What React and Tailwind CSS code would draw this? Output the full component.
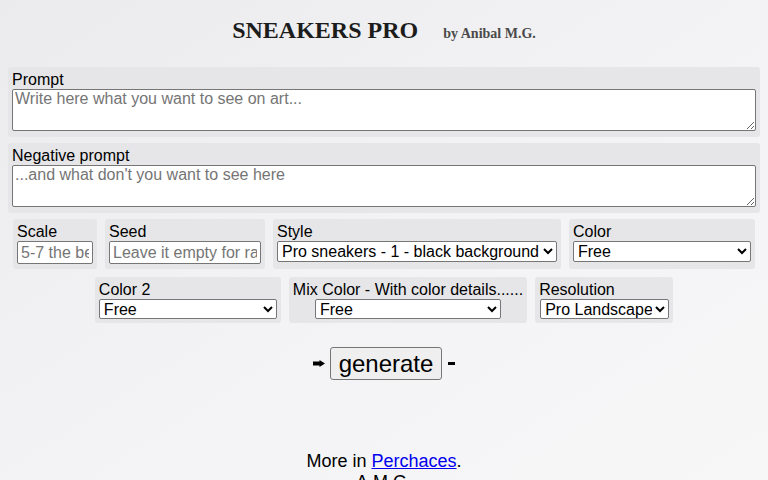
import { useState } from 'react'

const STYLES = [
  'Pro sneakers - 1 - black background',
  'Pro sneakers - 2 - white background',
  'Pro sneakers - 3 - street',
]
const COLORS = ['Free', 'Red', 'Blue', 'Green', 'Black', 'White']
const RESOLUTIONS = ['Pro Landscape', 'Pro Portrait', 'Square']

const panel = 'bg-[#e6e6e8] rounded-[3px] px-1 pt-1'
const label = 'block leading-[18px] text-[16px] text-black'
const field =
  'block bg-white border border-[#767676] rounded-[2px] text-[16px] text-black placeholder:text-[#757575]'

function Arrow() {
  return (
    <svg width="12" height="7" viewBox="0 0 12 7" className="shrink-0">
      <path d="M0 1.5h6.5V0L12 3.5 6.5 7V5.5H0z" fill="#000" />
    </svg>
  )
}

export default function App() {
  const [prompt, setPrompt] = useState('')
  const [negative, setNegative] = useState('')
  const [scale, setScale] = useState('')
  const [seed, setSeed] = useState('')
  const [style, setStyle] = useState(STYLES[0])
  const [color, setColor] = useState('Free')
  const [color2, setColor2] = useState('Free')
  const [mix, setMix] = useState('Free')
  const [resolution, setResolution] = useState(RESOLUTIONS[0])

  return (
    <div className="min-h-[480px] bg-gradient-to-br from-[#ebebed] via-[#f3f3f5] to-[#f7f7f8] font-['Liberation_Sans',Arial,sans-serif] text-black">
      <header className="h-[67px] flex justify-center items-baseline gap-[25px] pt-[16px] leading-[28px] font-['Liberation_Serif','Times_New_Roman',serif] font-bold">
        <h1 className="text-[24px] text-[#1c1c1c]">SNEAKERS PRO</h1>
        <span className="text-[14px] text-[#4a4a4a]">by Anibal M.G.</span>
      </header>

      <main className="px-2">
        <div className={`${panel} pb-1.5`}>
          <label className={label}>Prompt</label>
          <textarea
            value={prompt}
            onChange={(e) => setPrompt(e.target.value)}
            placeholder="Write here what you want to see on art..."
            className={`${field} w-full h-[42px] px-[2px] py-0 leading-[18px]`}
          />
        </div>

        <div className={`${panel} pb-1.5 mt-1.5`}>
          <label className={label}>Negative prompt</label>
          <textarea
            value={negative}
            onChange={(e) => setNegative(e.target.value)}
            placeholder="...and what don't you want to see here"
            className={`${field} w-full h-[42px] px-[2px] py-0 leading-[18px]`}
          />
        </div>

        <div className="flex justify-center gap-2 mt-1.5">
          <div className={`${panel} pb-[5px]`}>
            <label className={label}>Scale</label>
            <input
              value={scale}
              onChange={(e) => setScale(e.target.value)}
              placeholder="5-7 the best"
              className={`${field} w-[76px] h-[23px] px-[3px]`}
            />
          </div>
          <div className={`${panel} pb-[5px]`}>
            <label className={label}>Seed</label>
            <input
              value={seed}
              onChange={(e) => setSeed(e.target.value)}
              placeholder="Leave it empty for random"
              className={`${field} w-[152px] h-[23px] px-[3px]`}
            />
          </div>
          <div className={`${panel} pb-[5px]`}>
            <label className={label}>Style</label>
            <select
              value={style}
              onChange={(e) => setStyle(e.target.value)}
              className={`${field} w-[280px] h-[21px]`}
            >
              {STYLES.map((s) => (
                <option key={s}>{s}</option>
              ))}
            </select>
          </div>
          <div className={`${panel} pb-[5px]`}>
            <label className={label}>Color</label>
            <select
              value={color}
              onChange={(e) => setColor(e.target.value)}
              className={`${field} w-[178px] h-[21px]`}
            >
              {COLORS.map((c) => (
                <option key={c}>{c}</option>
              ))}
            </select>
          </div>
        </div>

        <div className="flex justify-center gap-2 mt-2">
          <div className={`${panel} pb-1`}>
            <label className={label}>Color 2</label>
            <select
              value={color2}
              onChange={(e) => setColor2(e.target.value)}
              className={`${field} w-[178px] h-[20px]`}
            >
              {COLORS.map((c) => (
                <option key={c}>{c}</option>
              ))}
            </select>
          </div>
          <div className={`${panel} pb-1 text-center`}>
            <label className={`${label} text-left`}>Mix Color - With color details......</label>
            <select
              value={mix}
              onChange={(e) => setMix(e.target.value)}
              className={`${field} w-[186px] h-[20px] mx-auto`}
            >
              {COLORS.map((c) => (
                <option key={c}>{c}</option>
              ))}
            </select>
          </div>
          <div className={`${panel} pb-1`}>
            <label className={label}>Resolution</label>
            <select
              value={resolution}
              onChange={(e) => setResolution(e.target.value)}
              className={`${field} w-[129px] h-[20px] ml-[1px]`}
            >
              {RESOLUTIONS.map((r) => (
                <option key={r}>{r}</option>
              ))}
            </select>
          </div>
        </div>

        <div className="flex justify-center items-center mt-6">
          <Arrow />
          <button
            type="button"
            className="ml-[5px] px-2 py-0.5 bg-[#efefef] border border-[#767676] rounded-[3px] text-[24px] leading-[27px] text-black"
          >
            generate
          </button>
          <span className="ml-[6px] w-[7px] h-[3px] bg-black" />
        </div>

        <div className="mt-[71px] text-center text-[18px] leading-[21px]">
          <p>
            More in{' '}
            <a href="#" className="text-[#0000ee] underline">
              Perchaces
            </a>
            .
          </p>
          <p>A.M.G.</p>
        </div>
      </main>
    </div>
  )
}
